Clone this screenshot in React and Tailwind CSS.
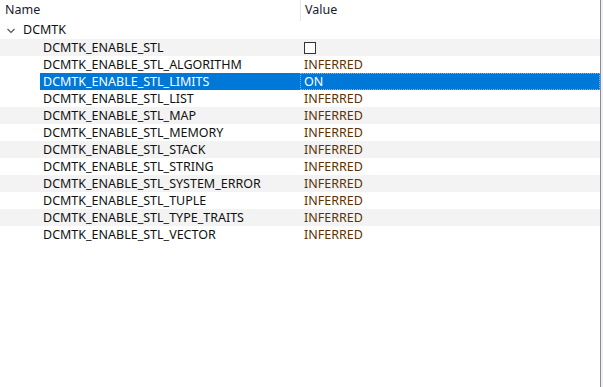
import React from 'react';

const rows = [
  { name: 'DCMTK_ENABLE_STL', value: null },
  { name: 'DCMTK_ENABLE_STL_ALGORITHM', value: 'INFERRED' },
  { name: 'DCMTK_ENABLE_STL_LIMITS', value: 'ON', selected: true },
  { name: 'DCMTK_ENABLE_STL_LIST', value: 'INFERRED' },
  { name: 'DCMTK_ENABLE_STL_MAP', value: 'INFERRED' },
  { name: 'DCMTK_ENABLE_STL_MEMORY', value: 'INFERRED' },
  { name: 'DCMTK_ENABLE_STL_STACK', value: 'INFERRED' },
  { name: 'DCMTK_ENABLE_STL_STRING', value: 'INFERRED' },
  { name: 'DCMTK_ENABLE_STL_SYSTEM_ERROR', value: 'INFERRED' },
  { name: 'DCMTK_ENABLE_STL_TUPLE', value: 'INFERRED' },
  { name: 'DCMTK_ENABLE_STL_TYPE_TRAITS', value: 'INFERRED' },
  { name: 'DCMTK_ENABLE_STL_VECTOR', value: 'INFERRED' },
];

function Row({ row, index }) {
  const striped = index % 2 === 0;
  if (row.selected) {
    return (
      <div className="flex h-[17px] bg-white">
        <div className="w-[40px]" />
        <div className="w-[260px] bg-[#0078d7] text-white pl-[3px] leading-[17px]">{row.name}</div>
        <div className="w-[300px] bg-[#0078d7] text-white border border-dotted border-[#e8a04a] pl-[3px] leading-[15px]">
          {row.value}
        </div>
      </div>
    );
  }
  return (
    <div className={`flex h-[17px] leading-[17px] ${striped ? 'bg-[#f3f3f3]' : 'bg-white'}`}>
      <div className="w-[300px] pl-[43px] text-[#111]">{row.name}</div>
      <div className="w-[300px] pl-[4px] text-[#5e3100] flex items-center">
        {row.value === null ? (
          <div className="w-[12px] h-[12px] border border-[#333] bg-white" />
        ) : (
          row.value
        )}
      </div>
    </div>
  );
}

export default function App() {
  return (
    <div className="w-[603px] h-[387px] flex bg-white text-[12.5px]" style={{ fontFamily: '"Noto Sans", "Open Sans", sans-serif' }}>
      <div className="w-[600px] flex flex-col">
        {/* header */}
        <div className="flex h-[22px] text-[#1a1a2e]">
          <div className="w-[300px] pl-[5px] pt-[1px]">Name</div>
          <div className="w-[300px] flex">
            <div className="w-px h-[21px] bg-[#e5e5e5]" />
            <div className="pl-[4px] pt-[1px]">Value</div>
          </div>
        </div>

        {/* group */}
        <div className="flex h-[17px] items-center text-[#111]">
          <svg width="10" height="10" viewBox="0 0 10 10" className="ml-[6px]">
            <path d="M1.5 3 L5 6.5 L8.5 3" fill="none" stroke="#555" strokeWidth="1.2" />
          </svg>
          <span className="ml-[7px]">DCMTK</span>
        </div>

        {rows.map((row, i) => (
          <Row key={row.name} row={row} index={i} />
        ))}
      </div>

      {/* scrollbar edge */}
      <div className="w-px h-full bg-[#8a8a96]" />
      <div className="w-[2px] h-full bg-[#efefef]" />
    </div>
  );
}
